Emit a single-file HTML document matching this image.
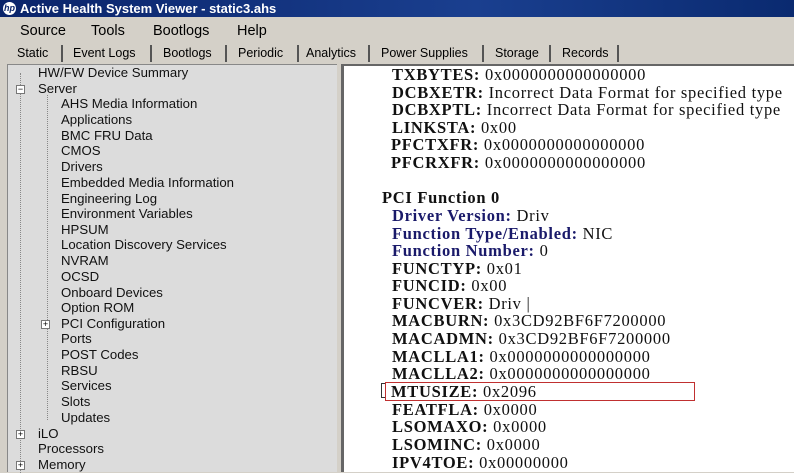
<!DOCTYPE html>
<html><head><style>
*{margin:0;padding:0;box-sizing:border-box}
body{width:794px;height:472px;overflow:hidden;background:#d4d0c8;font-family:"Liberation Sans",sans-serif;position:relative}
#title{position:absolute;left:0;top:0;width:794px;height:17px;background:linear-gradient(90deg,#0a246a,#1a3f8f 60%,#0a2a70);color:#fff;font-weight:bold;font-size:13px;line-height:17px;padding-left:20px}
#logo{position:absolute;left:3px;top:2px;width:13px;height:13px;border-radius:50%;background:#fff;color:#0a246a;font-size:9px;font-style:italic;line-height:13px;text-align:center}
#menu{position:absolute;top:17px;left:0;width:794px;height:26px;font-size:14.5px;line-height:28px}
#menu span{position:absolute;white-space:nowrap}
#tabs{position:absolute;top:44px;left:0;height:18px;font-size:12.5px;line-height:18px}
#tabs span{position:absolute;top:0;white-space:nowrap}
#tabs i{position:absolute;top:1px;width:2px;height:17px;background:#555}
#left{position:absolute;left:7px;top:64px;width:330px;height:408px;background:#dcdcdc;border-top:1px solid #888;border-left:1px solid #888}
.t{position:absolute;font-size:13.2px;color:#111;white-space:nowrap}
.box{position:absolute;width:9px;height:9px;border:1px solid #777;background:#fff;font-size:9px;line-height:7px;text-align:center}
#right{position:absolute;left:341px;top:64px;width:453px;height:408px;background:#fff;border-left:3px solid #666;border-top:2px solid #666}
.r{position:absolute;font-family:"Liberation Serif",serif;font-size:16.5px;letter-spacing:0.7px;color:#111;white-space:nowrap;line-height:18px}
.r b{font-weight:bold}
.n b{color:#1a1a6a}
</style></head><body>
<div id="title"><div id="logo">hp</div>Active Health System Viewer - static3.ahs</div>
<div id="menu"><span style="left:20px">Source</span><span style="left:91px">Tools</span><span style="left:153px">Bootlogs</span><span style="left:237px">Help</span></div>
<div id="tabs">
<span style="left:17px">Static</span><i style="left:61px"></i>
<span style="left:73px">Event Logs</span><i style="left:150px"></i>
<span style="left:163px">Bootlogs</span><i style="left:225px"></i>
<span style="left:238px">Periodic</span><i style="left:297px"></i>
<span style="left:306px">Analytics</span><i style="left:368px"></i>
<span style="left:381px">Power Supplies</span><i style="left:482px"></i>
<span style="left:495px">Storage</span><i style="left:549px"></i>
<span style="left:562px">Records</span><i style="left:617px"></i>
</div>
<div id="left">
<div style="position:absolute;left:12px;top:8px;height:400px;border-left:1px dotted #888"></div>
<div style="position:absolute;left:39px;top:30px;height:325px;border-left:1px dotted #888"></div>
</div>
<div class="box" style="left:16px;top:85px">−</div>
<div class="box" style="left:41px;top:320px">+</div>
<div class="box" style="left:16px;top:430px">+</div>
<div class="box" style="left:16px;top:461px">+</div>
<div class="t" style="left:38px;top:65px">HW/FW Device Summary</div>
<div class="t" style="left:38px;top:81px">Server</div>
<div class="t" style="left:61px;top:96px">AHS Media Information</div>
<div class="t" style="left:61px;top:112px">Applications</div>
<div class="t" style="left:61px;top:128px">BMC FRU Data</div>
<div class="t" style="left:61px;top:143px">CMOS</div>
<div class="t" style="left:61px;top:159px">Drivers</div>
<div class="t" style="left:61px;top:175px">Embedded Media Information</div>
<div class="t" style="left:61px;top:191px">Engineering Log</div>
<div class="t" style="left:61px;top:206px">Environment Variables</div>
<div class="t" style="left:61px;top:222px">HPSUM</div>
<div class="t" style="left:61px;top:237px">Location Discovery Services</div>
<div class="t" style="left:61px;top:253px">NVRAM</div>
<div class="t" style="left:61px;top:269px">OCSD</div>
<div class="t" style="left:61px;top:285px">Onboard Devices</div>
<div class="t" style="left:61px;top:300px">Option ROM</div>
<div class="t" style="left:61px;top:316px">PCI Configuration</div>
<div class="t" style="left:61px;top:331px">Ports</div>
<div class="t" style="left:61px;top:347px">POST Codes</div>
<div class="t" style="left:61px;top:363px">RBSU</div>
<div class="t" style="left:61px;top:378px">Services</div>
<div class="t" style="left:61px;top:394px">Slots</div>
<div class="t" style="left:61px;top:410px">Updates</div>
<div class="t" style="left:38px;top:426px">iLO</div>
<div class="t" style="left:38px;top:441px">Processors</div>
<div class="t" style="left:38px;top:457px">Memory</div>
<div id="right"></div>
<div class="r" style="left:392px;top:66px"><b>TXBYTES:</b> 0x0000000000000000</div>
<div class="r" style="left:392px;top:84px"><b>DCBXETR:</b> Incorrect Data Format for specified type</div>
<div class="r" style="left:392px;top:101px"><b>DCBXPTL:</b> Incorrect Data Format for specified type</div>
<div class="r" style="left:392px;top:119px"><b>LINKSTA:</b> 0x00</div>
<div class="r" style="left:391px;top:136px"><b>PFCTXFR:</b> 0x0000000000000000</div>
<div class="r" style="left:391px;top:154px"><b>PFCRXFR:</b> 0x0000000000000000</div>
<div class="r" style="left:382px;top:189px"><b>PCI Function 0</b></div>
<div class="r n" style="left:392px;top:207px"><b>Driver Version:</b> Driv</div>
<div class="r n" style="left:392px;top:225px"><b>Function Type/Enabled:</b> NIC</div>
<div class="r n" style="left:392px;top:242px"><b>Function Number:</b> 0</div>
<div class="r" style="left:392px;top:260px"><b>FUNCTYP:</b> 0x01</div>
<div class="r" style="left:392px;top:277px"><b>FUNCID:</b> 0x00</div>
<div class="r" style="left:392px;top:295px"><b>FUNCVER:</b> Driv |</div>
<div class="r" style="left:392px;top:312px"><b>MACBURN:</b> 0x3CD92BF6F7200000</div>
<div class="r" style="left:392px;top:330px"><b>MACADMN:</b> 0x3CD92BF6F7200000</div>
<div class="r" style="left:392px;top:348px"><b>MACLLA1:</b> 0x0000000000000000</div>
<div class="r" style="left:392px;top:365px"><b>MACLLA2:</b> 0x0000000000000000</div>
<div style="position:absolute;left:381px;top:383px;width:5px;height:15px;border:1px solid #333"></div>
<div style="position:absolute;left:385px;top:382px;width:310px;height:19px;border:1px solid #c03030"></div>
<div class="r" style="left:391px;top:383px"><b>MTUSIZE:</b> 0x2096</div>
<div class="r" style="left:392px;top:401px"><b>FEATFLA:</b> 0x0000</div>
<div class="r" style="left:392px;top:418px"><b>LSOMAXO:</b> 0x0000</div>
<div class="r" style="left:392px;top:436px"><b>LSOMINC:</b> 0x0000</div>
<div class="r" style="left:392px;top:454px"><b>IPV4TOE:</b> 0x00000000</div>
</body></html>
